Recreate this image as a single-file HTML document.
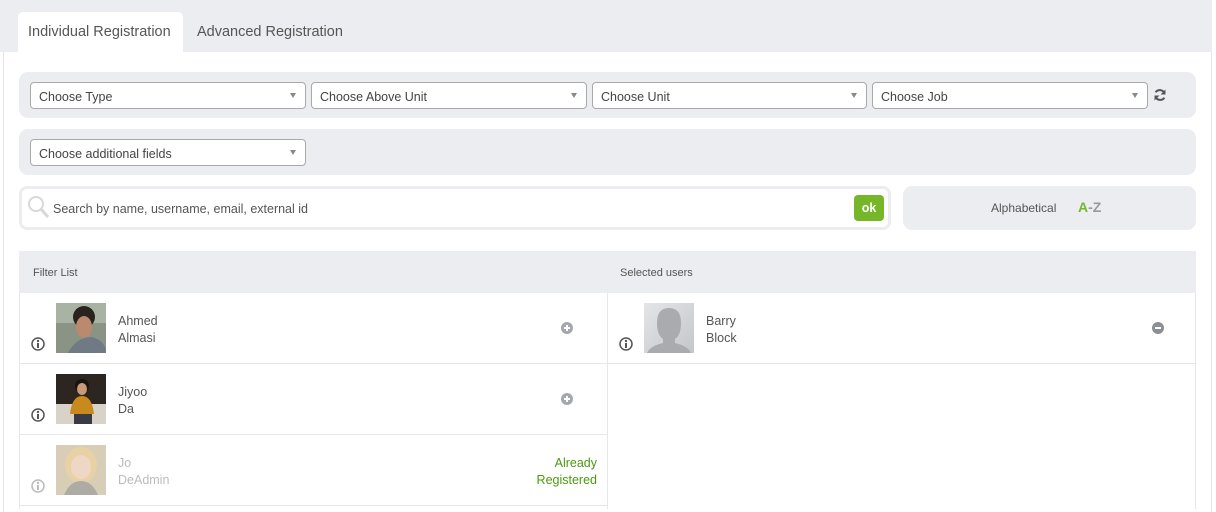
<!DOCTYPE html>
<html><head><meta charset="utf-8"><style>
*{box-sizing:border-box;margin:0;padding:0}
body{width:1216px;height:509px;overflow:hidden;background:#fff;font-family:"Liberation Sans",sans-serif;color:#555;position:relative}
.a{position:absolute}
.top{left:0;top:0;width:1212px;height:52px;background:#ecedf0}
.panel{left:3px;top:52px;width:1209px;height:460px;background:#fff;border-left:1px solid #e3e4e8;border-right:1px solid #e3e4e8}
.tab{font-size:14.5px;color:#555}
.box{background:#ecedf0;border-radius:9px}
.sel{background:#fff;border:1px solid #a9a9a9;border-radius:4px;height:27px;font-size:12.5px;color:#444;padding:7px 8px 0}
.sel:after{content:"";position:absolute;right:9px;top:10px;border-left:3.5px solid transparent;border-right:3.5px solid transparent;border-top:5px solid #888}
.nm{font-size:12.5px;line-height:17px;color:#555}
.row{border-bottom:1px solid #e6e7ea;background:#fff}
.av{width:50px;height:50px}
</style></head><body>
<div class="a top"></div>
<div class="a panel"></div>
<div class="a" style="left:18px;top:12px;width:165px;height:41px;background:#fff;border-radius:5px 5px 0 0"></div>
<div class="a tab" style="left:28px;top:24px">Individual Registration</div>
<div class="a tab" style="left:197px;top:24px">Advanced Registration</div>

<div class="a box" style="left:19px;top:72px;width:1177px;height:46px"></div>
<div class="a sel" style="left:30px;top:82px;width:276px">Choose Type</div>
<div class="a sel" style="left:311px;top:82px;width:276px">Choose Above Unit</div>
<div class="a sel" style="left:592px;top:82px;width:275px">Choose Unit</div>
<div class="a sel" style="left:872px;top:82px;width:276px">Choose Job</div>
<svg class="a" style="left:1153px;top:88px" width="14" height="14" viewBox="0 0 14 14"><path d="M11.5 5.5A5 5 0 0 0 2.6 4.3M2.5 8.5A5 5 0 0 0 11.4 9.7" fill="none" stroke="#555" stroke-width="2"/><path d="M12.5 1.5v5h-5zM1.5 12.5v-5h5z" fill="#555"/></svg>

<div class="a box" style="left:19px;top:129px;width:1177px;height:46px"></div>
<div class="a sel" style="left:30px;top:139px;width:276px">Choose additional fields</div>

<div class="a" style="left:19px;top:186px;width:872px;height:44px;border:3px solid #ecedf0;border-radius:8px;background:#fff"></div>
<svg class="a" style="left:27px;top:195px" width="24" height="26" viewBox="0 0 24 26"><circle cx="9" cy="9" r="7" fill="none" stroke="#d8d8d8" stroke-width="2"/><path d="M14 14l7 8" stroke="#d8d8d8" stroke-width="3"/></svg>
<div class="a" style="left:53px;top:202px;font-size:12.5px;color:#555">Search by name, username, email, external id</div>
<div class="a" style="left:854px;top:195px;width:30px;height:26px;background:#76b72a;border-radius:4px;color:#fff;font-size:12.5px;font-weight:bold;text-align:center;line-height:27px">ok</div>
<div class="a box" style="left:903px;top:186px;width:293px;height:44px"></div>
<div class="a" style="left:991px;top:201px;font-size:12px;color:#555">Alphabetical</div>
<div class="a" style="left:1078px;top:199px;font-size:14px;font-weight:bold;color:#76b72a">A<span style="color:#999">-Z</span></div>

<div class="a" style="left:19px;top:251px;width:1177px;height:42px;background:#ecedf0"></div>
<div class="a" style="left:33px;top:267px;font-size:11px;color:#555">Filter List</div>
<div class="a" style="left:620px;top:267px;font-size:11px;color:#555">Selected users</div>

<div class="a" style="left:19px;top:293px;width:589px;height:216px;border-left:1px solid #e6e7ea;border-right:1px solid #e6e7ea"></div>
<div class="a" style="left:607px;top:293px;width:589px;height:216px;border-right:1px solid #e6e7ea"></div>
<div class="a row" style="left:20px;top:293px;width:587px;height:71px"></div>
<div class="a row" style="left:20px;top:364px;width:587px;height:71px"></div>
<div class="a row" style="left:20px;top:435px;width:587px;height:71px"></div>
<div class="a row" style="left:608px;top:293px;width:587px;height:71px"></div>

<svg class="a" style="left:31px;top:337px" width="14" height="14" viewBox="0 0 14 14"><circle cx="7" cy="7" r="6" fill="none" stroke="#555" stroke-width="1.5"/><circle cx="7" cy="4" r="1.2" fill="#555"/><path d="M7 6v5" stroke="#555" stroke-width="2"/></svg>
<svg class="a av" style="left:56px;top:303px" viewBox="0 0 50 50"><rect width="50" height="50" fill="#8a9484"/><rect x="0" y="0" width="50" height="20" fill="#a9b3a4"/><circle cx="28" cy="14" r="11" fill="#2a221c"/><ellipse cx="28" cy="24" rx="8" ry="11" fill="#b98a6e"/><path d="M12 50 Q20 34 36 34 Q50 38 50 50z" fill="#6f7a85"/></svg>
<div class="a nm" style="left:118px;top:313px">Ahmed<br>Almasi</div>
<svg class="a" style="left:561px;top:322px" width="12" height="12" viewBox="0 0 12 12"><circle cx="6" cy="6" r="6" fill="#a4a7ac"/><path d="M6 3v6M3 6h6" stroke="#fff" stroke-width="2"/></svg>

<svg class="a" style="left:31px;top:408px" width="14" height="14" viewBox="0 0 14 14"><circle cx="7" cy="7" r="6" fill="none" stroke="#555" stroke-width="1.5"/><circle cx="7" cy="4" r="1.2" fill="#555"/><path d="M7 6v5" stroke="#555" stroke-width="2"/></svg>
<svg class="a av" style="left:56px;top:374px" viewBox="0 0 50 50"><rect width="50" height="50" fill="#2c2520"/><rect x="0" y="30" width="50" height="20" fill="#d9d2c8"/><circle cx="26" cy="12" r="7" fill="#1a1411"/><ellipse cx="26" cy="15" rx="5" ry="6" fill="#c99a7a"/><path d="M14 40 Q16 22 26 22 Q36 22 38 40z" fill="#c88a1c"/><rect x="18" y="40" width="18" height="10" fill="#3a3a44"/></svg>
<div class="a nm" style="left:118px;top:384px">Jiyoo<br>Da</div>
<svg class="a" style="left:561px;top:393px" width="12" height="12" viewBox="0 0 12 12"><circle cx="6" cy="6" r="6" fill="#a4a7ac"/><path d="M6 3v6M3 6h6" stroke="#fff" stroke-width="2"/></svg>

<svg class="a" style="left:31px;top:479px" width="14" height="14" viewBox="0 0 14 14"><circle cx="7" cy="7" r="6" fill="none" stroke="#bbb" stroke-width="1.5"/><circle cx="7" cy="4" r="1.2" fill="#bbb"/><path d="M7 6v5" stroke="#bbb" stroke-width="2"/></svg>
<svg class="a av" style="left:56px;top:445px;opacity:.6" viewBox="0 0 50 50"><rect width="50" height="50" fill="#bfae8a"/><ellipse cx="25" cy="20" rx="16" ry="18" fill="#d9b56a"/><ellipse cx="25" cy="22" rx="10" ry="12" fill="#e6bda0"/><path d="M8 50 Q14 36 25 36 Q36 36 42 50z" fill="#7a7468"/></svg>
<div class="a nm" style="left:118px;top:455px;color:#bbb">Jo<br>DeAdmin</div>
<div class="a nm" style="left:520px;top:455px;width:77px;text-align:right;color:#4a9a0e">Already<br>Registered</div>

<svg class="a" style="left:619px;top:337px" width="14" height="14" viewBox="0 0 14 14"><circle cx="7" cy="7" r="6" fill="none" stroke="#555" stroke-width="1.5"/><circle cx="7" cy="4" r="1.2" fill="#555"/><path d="M7 6v5" stroke="#555" stroke-width="2"/></svg>
<svg class="a av" style="left:644px;top:303px" viewBox="0 0 50 50"><defs><linearGradient id="g" x1="0" y1="0" x2="1" y2="1"><stop offset="0" stop-color="#e4e5e7"/><stop offset="1" stop-color="#c4c6c9"/></linearGradient></defs><rect width="50" height="50" fill="url(#g)"/><path d="M25 5 Q37 5 37 20 Q37 32 31 36 L31 40 Q44 43 47 50 L3 50 Q6 43 19 40 L19 36 Q13 32 13 20 Q13 5 25 5z" fill="#a9abae"/></svg>
<div class="a nm" style="left:706px;top:313px">Barry<br>Block</div>
<svg class="a" style="left:1152px;top:322px" width="12" height="12" viewBox="0 0 12 12"><circle cx="6" cy="6" r="6" fill="#8c8f94"/><path d="M3 6h6" stroke="#fff" stroke-width="2"/></svg>
</body></html>
